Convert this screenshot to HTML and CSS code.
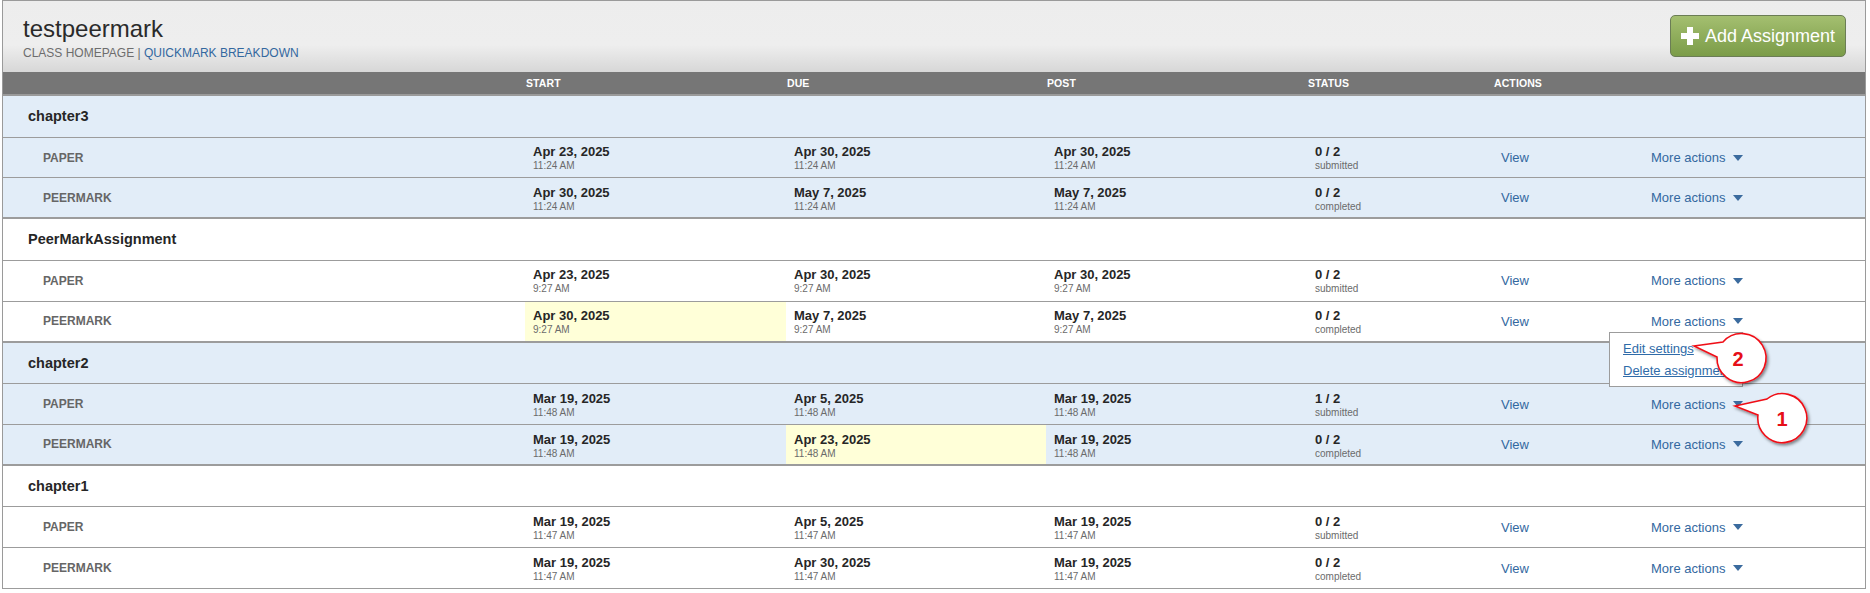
FILE: index.html
```html
<!DOCTYPE html>
<html lang="en">
<head>
<meta charset="utf-8">
<title>testpeermark</title>
<link rel="stylesheet" href="styles.css">
</head>
<body>
<div class="page">
  <header class="top">
    <div class="top-text">
      <h1 class="title">testpeermark</h1>
      <p class="crumbs">CLASS HOMEPAGE | <a class="crumb-link" href="#">QUICKMARK BREAKDOWN</a></p>
    </div>
    <a class="add-btn" href="#">
      <svg class="plus" viewBox="0 0 18 18" aria-hidden="true"><path d="M6 0h6v6h6v6h-6v6H6v-6H0V6h6z"/></svg>
      <span>Add Assignment</span>
    </a>
  </header>
  <div class="cols head">
    <span></span><span>START</span><span>DUE</span><span>POST</span><span>STATUS</span><span>ACTIONS</span><span></span>
  </div>

  <section class="group blue">
    <div class="group-title">chapter3</div>
    <div class="cols row">
      <div class="kind">PAPER</div>
      <div class="cell"><b>Apr 23, 2025</b><small>11:24 AM</small></div>
      <div class="cell"><b>Apr 30, 2025</b><small>11:24 AM</small></div>
      <div class="cell"><b>Apr 30, 2025</b><small>11:24 AM</small></div>
      <div class="cell"><b>0 / 2</b><small>submitted</small></div>
      <a class="view" href="#">View</a>
      <a class="more" href="#">More actions<i class="caret"></i></a>
    </div>
    <div class="cols row">
      <div class="kind">PEERMARK</div>
      <div class="cell"><b>Apr 30, 2025</b><small>11:24 AM</small></div>
      <div class="cell"><b>May 7, 2025</b><small>11:24 AM</small></div>
      <div class="cell"><b>May 7, 2025</b><small>11:24 AM</small></div>
      <div class="cell"><b>0 / 2</b><small>completed</small></div>
      <a class="view" href="#">View</a>
      <a class="more" href="#">More actions<i class="caret"></i></a>
    </div>
  </section>

  <section class="group">
    <div class="group-title">PeerMarkAssignment</div>
    <div class="cols row">
      <div class="kind">PAPER</div>
      <div class="cell"><b>Apr 23, 2025</b><small>9:27 AM</small></div>
      <div class="cell"><b>Apr 30, 2025</b><small>9:27 AM</small></div>
      <div class="cell"><b>Apr 30, 2025</b><small>9:27 AM</small></div>
      <div class="cell"><b>0 / 2</b><small>submitted</small></div>
      <a class="view" href="#">View</a>
      <a class="more" href="#">More actions<i class="caret"></i></a>
    </div>
    <div class="cols row">
      <div class="kind">PEERMARK</div>
      <div class="cell hl"><b>Apr 30, 2025</b><small>9:27 AM</small></div>
      <div class="cell"><b>May 7, 2025</b><small>9:27 AM</small></div>
      <div class="cell"><b>May 7, 2025</b><small>9:27 AM</small></div>
      <div class="cell"><b>0 / 2</b><small>completed</small></div>
      <a class="view" href="#">View</a>
      <a class="more" href="#">More actions<i class="caret"></i></a>
    </div>
  </section>

  <section class="group blue">
    <div class="group-title">chapter2</div>
    <div class="cols row">
      <div class="kind">PAPER</div>
      <div class="cell"><b>Mar 19, 2025</b><small>11:48 AM</small></div>
      <div class="cell"><b>Apr 5, 2025</b><small>11:48 AM</small></div>
      <div class="cell"><b>Mar 19, 2025</b><small>11:48 AM</small></div>
      <div class="cell"><b>1 / 2</b><small>submitted</small></div>
      <a class="view" href="#">View</a>
      <a class="more" href="#">More actions<i class="caret"></i></a>
    </div>
    <div class="cols row">
      <div class="kind">PEERMARK</div>
      <div class="cell"><b>Mar 19, 2025</b><small>11:48 AM</small></div>
      <div class="cell hl"><b>Apr 23, 2025</b><small>11:48 AM</small></div>
      <div class="cell"><b>Mar 19, 2025</b><small>11:48 AM</small></div>
      <div class="cell"><b>0 / 2</b><small>completed</small></div>
      <a class="view" href="#">View</a>
      <a class="more" href="#">More actions<i class="caret"></i></a>
    </div>
  </section>

  <section class="group last">
    <div class="group-title">chapter1</div>
    <div class="cols row">
      <div class="kind">PAPER</div>
      <div class="cell"><b>Mar 19, 2025</b><small>11:47 AM</small></div>
      <div class="cell"><b>Apr 5, 2025</b><small>11:47 AM</small></div>
      <div class="cell"><b>Mar 19, 2025</b><small>11:47 AM</small></div>
      <div class="cell"><b>0 / 2</b><small>submitted</small></div>
      <a class="view" href="#">View</a>
      <a class="more" href="#">More actions<i class="caret"></i></a>
    </div>
    <div class="cols row">
      <div class="kind">PEERMARK</div>
      <div class="cell"><b>Mar 19, 2025</b><small>11:47 AM</small></div>
      <div class="cell"><b>Apr 30, 2025</b><small>11:47 AM</small></div>
      <div class="cell"><b>Mar 19, 2025</b><small>11:47 AM</small></div>
      <div class="cell"><b>0 / 2</b><small>completed</small></div>
      <a class="view" href="#">View</a>
      <a class="more" href="#">More actions<i class="caret"></i></a>
    </div>
  </section>
</div>

<div class="menu">
  <a class="menu-link" href="#">Edit settings</a>
  <a class="menu-link" href="#">Delete assignment</a>
</div>

<svg class="callouts" viewBox="0 0 200 130" aria-hidden="true">
  <defs>
    <filter id="sh" x="-20%" y="-20%" width="150%" height="150%">
      <feDropShadow dx="1.5" dy="2" stdDeviation="1.6" flood-color="#000" flood-opacity=".45"/>
    </filter>
  </defs>
  <path class="bubble" filter="url(#sh)" d="M14 14 L43 10 A24.5 24.5 0 1 1 37 25 Z"/>
  <text class="num" x="58" y="34">2</text>
  <path class="bubble" filter="url(#sh)" d="M55 74 L87 67 A24.5 24.5 0 1 1 78 83 Z"/>
  <text class="num" x="102" y="94">1</text>
</svg>
</body>
</html>
```

FILE: styles.css
```css
* { box-sizing: border-box; }
html, body { margin: 0; padding: 0; background: #fff; }
body {
  position: relative;
  width: 1870px;
  height: 593px;
  overflow: hidden;
  font-family: "Liberation Sans", Arial, sans-serif;
  color: #222;
}
a { color: #33689f; text-decoration: none; }

.page {
  margin: 0 4px 0 2px;
  border: solid #9a9a9a;
  border-width: 1px 1px 0 1px;
}

.top {
  height: 71px;
  padding: 15px 19px 0 20px;
  display: flex;
  justify-content: space-between;
  align-items: flex-start;
  background: linear-gradient(#ededed 0, #eeeeee 62%, #d7d7d7 100%);
}
.title { margin: 0; font-weight: 400; font-size: 24px; line-height: 26px; color: #2a2a2a; }
.crumbs { margin: 4px 0 0; font-size: 12px; line-height: 14px; color: #6d6d6d; }
.crumb-link { color: #33689f; }

.add-btn {
  width: 176px;
  height: 42px;
  margin-top: -1px;
  display: flex;
  align-items: center;
  gap: 6px;
  padding-left: 10px;
  border: 1px solid #6b7d55;
  border-radius: 5px;
  background: linear-gradient(#a4bf70, #7b9c48);
  color: #fff;
  font-size: 18px;
}
.plus { width: 18px; height: 18px; fill: #fff; flex: none; }

.cols {
  display: grid;
  grid-template-columns: 522px 261px 260px 261px 186px 150px 1fr;
}
.head {
  height: 24px;
  padding-bottom: 2px;
  border-bottom: 2px solid #9a9a9a;
  background: #767676;
  color: #fff;
  font-size: 10.5px;
  font-weight: 700;
  line-height: 22px;
  letter-spacing: .1px;
}
.head span { padding-left: 1px; }

.group { background: #fff; }
.blue { background: #e2edf8; }
.group-title {
  height: 41.6px;
  padding: 12px 0 0 25px;
  border-bottom: 1px solid #9c9c9c;
  font-size: 14.5px;
  font-weight: 700;
  line-height: 17px;
  color: #262626;
}
.row {
  height: 40.85px;
  border-bottom: 1px solid #9c9c9c;
  align-items: stretch;
}
.group > .row:last-child { border-bottom: 2px solid #9c9c9c; }
.group.last > .row:last-child { border-bottom: 1px solid #9c9c9c; }

.kind {
  align-self: center;
  padding-left: 40px;
  font-size: 12px;
  font-weight: 700;
  color: #666;
}
.cell { padding: 6.5px 0 0 8px; }
.cell b { display: block; font-size: 13px; line-height: 15px; color: #262626; }
.cell small { display: block; font-size: 10px; line-height: 12px; margin-top: 1px; color: #6b6b6b; }
.hl { background: #ffffd8; }

.view, .more {
  align-self: center;
  padding-left: 8px;
  font-size: 13px;
}
.more { display: flex; align-items: center; }
.caret {
  margin-left: 8px;
  width: 0;
  height: 0;
  border: solid transparent;
  border-width: 6px 5.5px 0;
  border-top-color: #3b6b9e;
}

.menu {
  position: absolute;
  left: 1609px;
  top: 332px;
  width: 134px;
  height: 55px;
  padding: 8px 0 0 13px;
  background: #fff;
  border: 1px solid #9c9c9c;
  display: flex;
  flex-direction: column;
  gap: 7px;
}
.menu-link {
  font-size: 13px;
  line-height: 15px;
  color: #2f6ba8;
  text-decoration: underline;
  white-space: nowrap;
}

.callouts {
  position: absolute;
  left: 1680px;
  top: 332px;
  width: 200px;
  height: 130px;
  overflow: visible;
}
.bubble { fill: #fff; stroke: #f01018; stroke-width: 1.6; stroke-linejoin: miter; }
.num {
  font-family: "Liberation Sans", Arial, sans-serif;
  font-size: 20px;
  font-weight: 700;
  fill: #e60f18;
  text-anchor: middle;
}
```
